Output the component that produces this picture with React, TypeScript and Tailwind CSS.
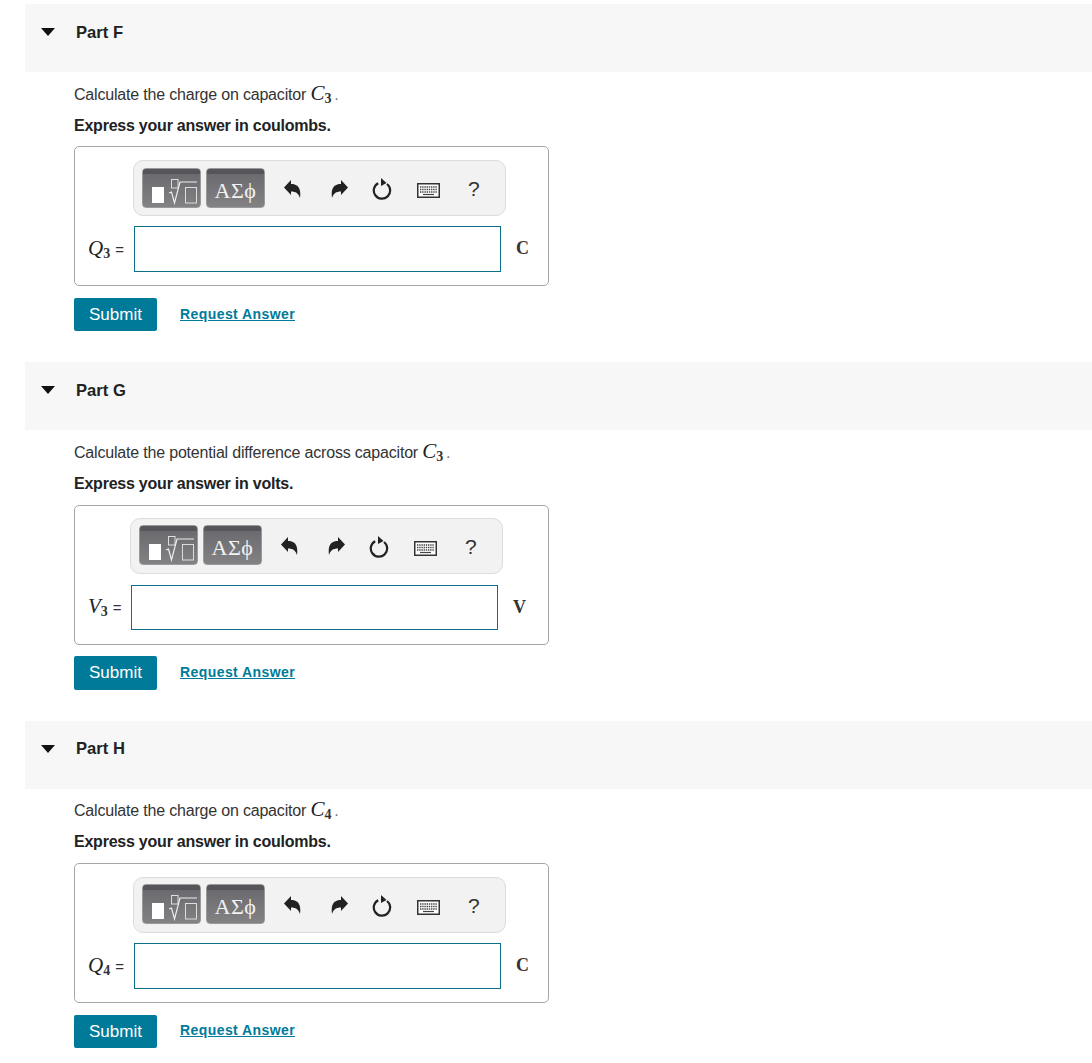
const sans = "font-['Liberation_Sans',Arial,sans-serif]";
const serif = "font-['Liberation_Serif','Times_New_Roman',serif]";

function TemplatesButton() {
  return (
    <div className="w-[59px] h-[40px] rounded-[4px] border border-[#9a9a9a] overflow-hidden bg-gradient-to-b from-[#68686c] to-[#828285]">
      <div className="h-[5px] bg-[#56565a]" />
      <svg width="57" height="34" viewBox="0 0 57 34" fill="none">
        <rect x="9" y="13" width="12" height="16" fill="#fff" />
        <rect x="28.5" y="5.5" width="6.5" height="8.5" stroke="#ddd" strokeWidth="1" />
        <path d="M26 19 L28.5 18 L31.5 29 L37 8 L54 8" stroke="#eee" strokeWidth="1.2" />
        <rect x="42.5" y="13.5" width="11" height="15.5" stroke="#ddd" strokeWidth="1" />
      </svg>
    </div>
  );
}

function SymbolsButton() {
  return (
    <div className="w-[59px] h-[40px] rounded-[4px] border border-[#9a9a9a] overflow-hidden bg-gradient-to-b from-[#68686c] to-[#828285]">
      <div className="h-[5px] bg-[#56565a]" />
      <div className={`${serif} h-[34px] text-center text-[#f2f2f2] text-[22px] leading-[33px] tracking-[0.5px]`}>ΑΣϕ</div>
    </div>
  );
}

function Arrow({ flip }: { flip?: boolean }) {
  return (
    <svg width="17" height="18" viewBox="0 0 17 18" className={flip ? "-scale-x-100" : ""}>
      <path d="M0 7.5 L7 0 V4 C13 4 17.5 7 16 18 C14.5 13.5 12 11.5 7 11.5 V15 Z" fill="#222" />
    </svg>
  );
}

function Toolbar() {
  return (
    <div className="w-[373px] h-[56px] rounded-[10px] border border-[#dcdcdc] bg-[#f2f2f2] flex items-center pl-[8px]">
      <div className="flex gap-[5px] mt-[-1px]">
        <TemplatesButton />
        <SymbolsButton />
      </div>
      <div className="ml-[19px] mt-[1px]"><Arrow /></div>
      <div className="ml-[30px] mt-[1px]"><Arrow flip /></div>
      <svg width="20" height="23" viewBox="0 0 20 23" fill="none" className="ml-[24px] mt-[3px]">
        <path d="M6.2 5.2 A8.2 8.2 0 1 0 15 6" stroke="#222" strokeWidth="2.2" />
        <path d="M9 0 L14.5 5 L9 8 Z" fill="#222" />
      </svg>
      <svg width="23" height="15" viewBox="0 0 23 15" fill="none" className="ml-[25px] mt-[5px]">
        <rect x="0.75" y="0.75" width="21.5" height="13.5" fill="#fff" stroke="#333" strokeWidth="1.5" />
        <path d="M3 4 H20 M3 6.5 H20 M3 9 H20" stroke="#444" strokeWidth="1.3" strokeDasharray="1.4 0.8" />
        <path d="M6 11.5 H17" stroke="#444" strokeWidth="1.2" />
      </svg>
      <span className={`${sans} ml-[28px] mt-[1px] text-[21px] leading-none text-[#333]`}>?</span>
    </div>
  );
}

function Part({ letter, text, sub, express, unit, label, shift }: {
  letter: string;
  text: string;
  sub: string;
  express: string;
  unit: string;
  label: string;
  shift?: boolean;
}) {
  return (
    <section className="h-[358.4px]">
      <div className="ml-[25px] h-[68px] bg-[#f7f7f7] flex items-start pt-[24px]">
        <svg width="14" height="8" viewBox="0 0 14 8" className="ml-[16px]">
          <path d="M0 0 H14 L7 8 Z" fill="#111" />
        </svg>
        <h2 className={`${sans} ml-[21px] mt-[-4.4px] text-[16.6px] leading-[18px] font-bold text-[#222]`}>Part {letter}</h2>
      </div>
      <div className={`${sans} ml-[74px] w-[475px] text-[16px] text-[#333]`}>
        <p className="mt-[9.6px] h-[22px] leading-[22px] tracking-[-0.19px] whitespace-nowrap">
          {text}{" "}
          <i className={`${serif} text-[21px] text-[#222] tracking-normal`}>C</i>
          <sub className={`${serif} text-[14px] font-bold bottom-[-3px] relative leading-none`}>{sub}</sub>
          <span className="ml-[3px] text-[#777]">.</span>
        </p>
        <p className="mt-[11px] h-[22px] leading-[22px] font-bold tracking-[-0.23px] text-[#222]">{express}</p>
        <div className={`mt-[9.6px] h-[140px] border border-[#a6a6a6] rounded-[5px] ${shift ? "pl-[55px] pt-[12px]" : "pl-[58px] pt-[13px]"}`}>
          <Toolbar />
          <div className={`flex items-center ${shift ? "mt-[11px] ml-[-55px]" : "mt-[10px] ml-[-58px]"}`}>
            <div className={`${shift ? "w-[56px]" : "w-[59px]"} pl-[13px] whitespace-nowrap text-[#333]`}>
              <i className={`${serif} text-[21px] text-[#222]`}>{label}</i>
              <sub className={`${serif} text-[14px] font-bold bottom-[-3px] relative leading-none`}>{sub}</sub>
              <span className="ml-[5px] text-[15px]">=</span>
            </div>
            <div className={`w-[367px] ${shift ? "h-[45px]" : "h-[45.6px]"} border border-[#0e6f8a] bg-white`} />
            <span className={`${serif} ml-[15px] text-[18px] font-bold text-[#333]`}>{unit}</span>
          </div>
        </div>
        <div className="mt-[11.8px] flex items-center">
          <button className="w-[83px] h-[33.4px] rounded-[2px] bg-[#007a99] text-white text-[17px]">Submit</button>
          <a href="#" className="ml-[23px] mb-[1px] text-[#007a99] text-[14px] font-bold underline tracking-[0.42px]">Request Answer</a>
        </div>
      </div>
    </section>
  );
}

export default function App() {
  return (
    <div className="bg-white w-[1092px] h-[1063px] overflow-hidden pt-[4px]">
      <Part letter="F" text="Calculate the charge on capacitor" sub="3" express="Express your answer in coulombs." unit="C" label="Q" />
      <Part letter="G" text="Calculate the potential difference across capacitor" sub="3" express="Express your answer in volts." unit="V" label="V" shift />
      <Part letter="H" text="Calculate the charge on capacitor" sub="4" express="Express your answer in coulombs." unit="C" label="Q" />
    </div>
  );
}
